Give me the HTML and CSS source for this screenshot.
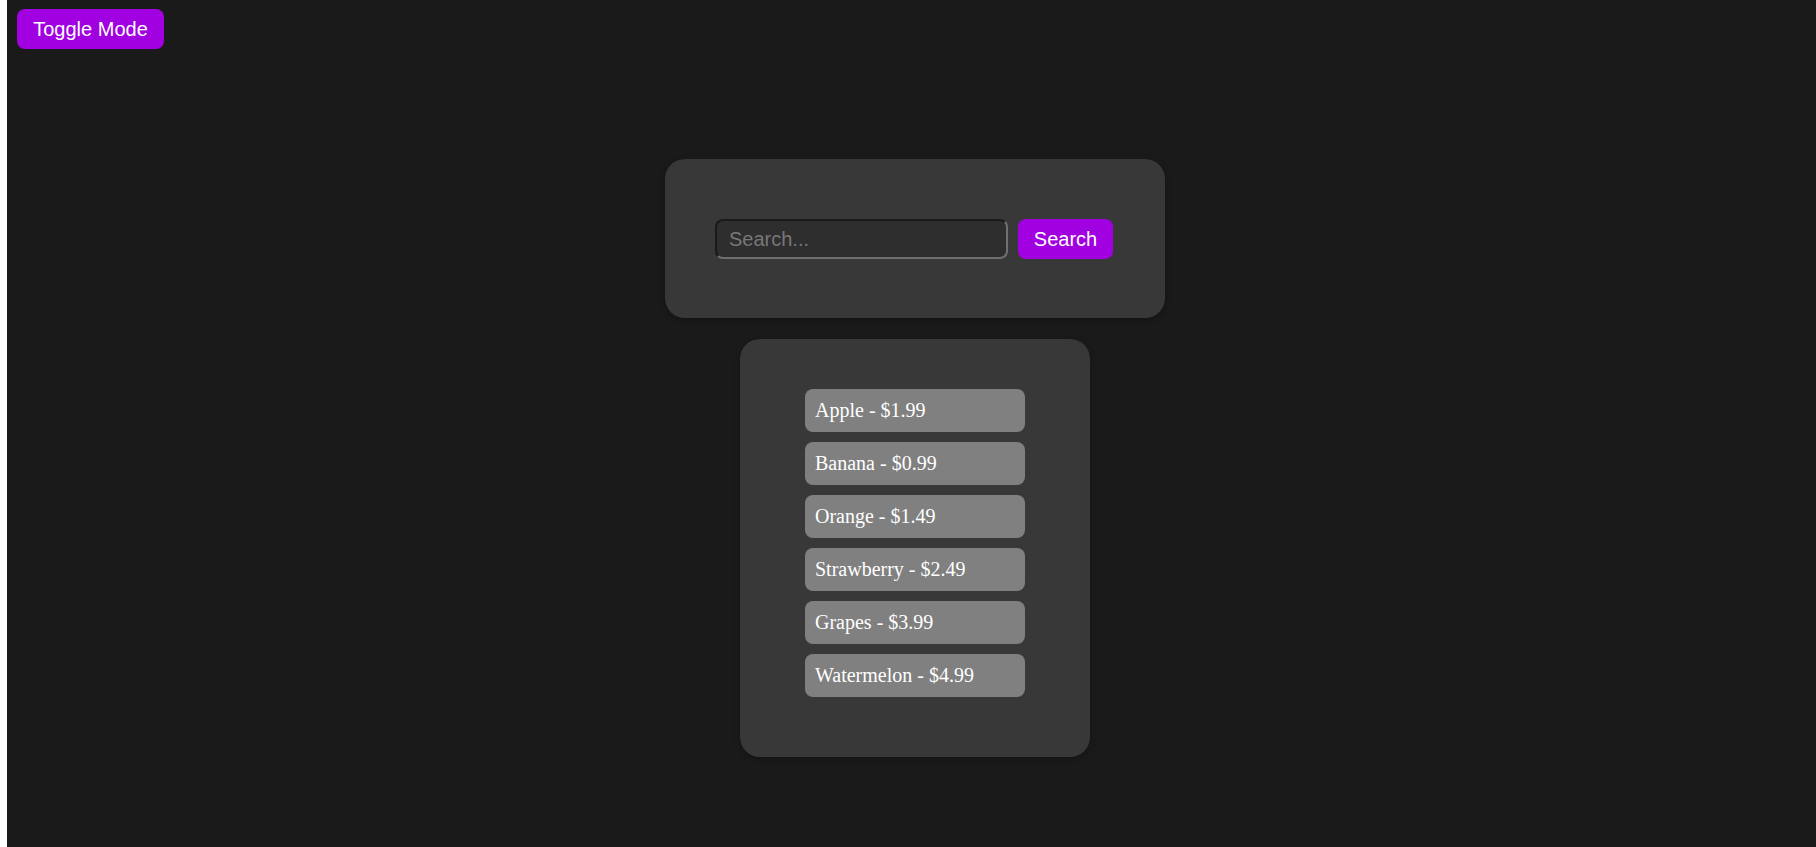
FILE: index.html
```html
<!DOCTYPE html>
<html lang="en">
<head>
<meta charset="utf-8">
<title>Fruit Search</title>
<link rel="stylesheet" href="styles.css">
</head>
<body>
<header class="top-bar">
  <button class="btn toggle-btn" type="button">Toggle Mode</button>
</header>
<main class="main">
  <section class="search-card">
    <input class="search-input" type="text" placeholder="Search...">
    <button class="btn search-btn" type="button">Search</button>
  </section>
  <section class="list-card">
    <ul class="fruit-list">
      <li class="fruit-item">Apple - $1.99</li>
      <li class="fruit-item">Banana - $0.99</li>
      <li class="fruit-item">Orange - $1.49</li>
      <li class="fruit-item">Strawberry - $2.49</li>
      <li class="fruit-item">Grapes - $3.99</li>
      <li class="fruit-item">Watermelon - $4.99</li>
    </ul>
  </section>
</main>
</body>
</html>
```
FILE: styles.css
```css
html {
  background: #ffffff;
  overflow: hidden;
}

body {
  margin: 0 0 0 7px;
  width: 100vw;
  min-height: 100vh;
  background: #1a1a1a;
  font-family: "Liberation Serif", "Times New Roman", serif;
  color: #ffffff;
}

.top-bar {
  display: flex;
  padding: 9px 10px 0;
}

.btn {
  font-family: "Liberation Sans", Arial, sans-serif;
  font-size: 20px;
  line-height: 23px;
  color: #ffffff;
  background: #a100e0;
  border: none;
  border-radius: 8px;
  cursor: pointer;
}

.toggle-btn {
  width: 147px;
  height: 40px;
  padding: 1px 0 0;
}

.main {
  display: flex;
  flex-direction: column;
  align-items: center;
  gap: 21px;
  padding-top: 110px;
}

.search-card {
  width: 500px;
  height: 159px;
  box-sizing: border-box;
  background: #383838;
  border-radius: 20px;
  box-shadow: 0 2px 6px rgba(0, 0, 0, 0.25);
  display: flex;
  align-items: center;
  justify-content: center;
  gap: 10px;
  padding: 0 2px 0 0;
}

.search-input {
  width: 293px;
  height: 40px;
  box-sizing: border-box;
  background: #2e2e2e;
  border: 2px inset #6f6f6f;
  border-radius: 8px;
  padding: 1px 12px 0;
  font-family: "Liberation Sans", Arial, sans-serif;
  font-size: 20px;
  color: #ffffff;
  outline: none;
}

.search-input::placeholder {
  color: #777777;
}

.search-btn {
  width: 95px;
  height: 40px;
  padding: 1px 0 0;
}

.list-card {
  width: 350px;
  box-sizing: border-box;
  background: #383838;
  border-radius: 20px;
  box-shadow: 0 2px 6px rgba(0, 0, 0, 0.25);
  padding: 50px 0 60px;
  display: flex;
  justify-content: center;
}

.fruit-list {
  list-style: none;
  margin: 0;
  padding: 0;
  display: flex;
  flex-direction: column;
  gap: 10px;
  width: 220px;
}

.fruit-item {
  background: #808080;
  border-radius: 8px;
  padding: 10px;
  font-size: 20px;
  line-height: 23px;
  color: #ffffff;
}
```
